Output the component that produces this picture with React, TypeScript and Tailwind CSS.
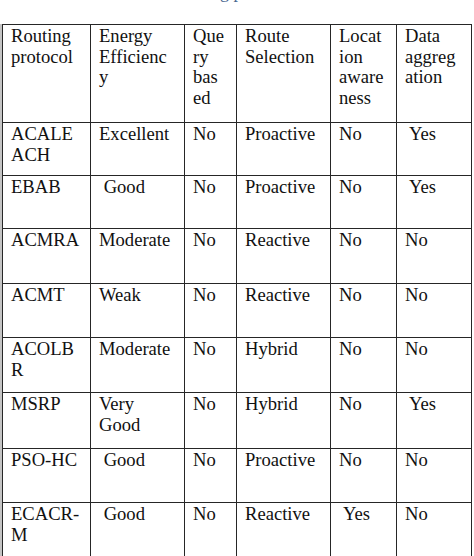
import React from "react";

const header: React.ReactNode[] = [
  <>Routing<br />protocol</>,
  <>Energy<br />Efficienc<br />y</>,
  <>Que<br />ry<br />bas<br />ed</>,
  <>Route<br />Selection</>,
  <>Locat<br />ion<br />aware<br />ness</>,
  <>Data<br />aggreg<br />ation</>,
];

const rows: React.ReactNode[][] = [
  [<>ACALE<br />ACH</>, "Excellent", "No", "Proactive", "No", " Yes"],
  ["EBAB", " Good", "No", "Proactive", "No", " Yes"],
  ["ACMRA", "Moderate", "No", "Reactive", "No", "No"],
  ["ACMT", "Weak", "No", "Reactive", "No", "No"],
  [<>ACOLB<br />R</>, "Moderate", "No", "Hybrid", "No", "No"],
  ["MSRP", <>Very<br />Good</>, "No", "Hybrid", "No", " Yes"],
  ["PSO-HC", " Good", "No", "Proactive", "No", "No"],
  [<>ECACR-<br />M</>, " Good", "No", "Reactive", " Yes", "No"],
];

function Cell({ children }: { children: React.ReactNode }) {
  return (
    <div className="border-r border-b border-[#262626] pl-[8px] pt-[1px] whitespace-pre leading-[20.7px] text-[18.6px] text-[#111] overflow-hidden">
      {children}
    </div>
  );
}

export default function App() {
  return (
    <div
      className="w-[474px] h-[556px] bg-white overflow-hidden"
      style={{ fontFamily: '"Liberation Serif", "Times New Roman", serif' }}
    >
      <div className="h-[24px] overflow-hidden pl-[171px]">
        <div className="mt-[-18.5px] text-[18px] leading-[20.7px] text-[#4a6690] whitespace-nowrap">
          Routing protocols
        </div>
      </div>
      <div className="flex">
        <div className="w-[2px] bg-[#c4c4c4]" />
        <div className="grid grid-cols-[88px_94px_52px_94px_66px_75px] grid-rows-[98px_53px_53px_55px_54px_55px_56px_54px_54px] border-l border-t border-[#262626]">
          {header.map((h, i) => (
            <Cell key={"h" + i}>{h}</Cell>
          ))}
          {rows.map((r, ri) =>
            r.map((c, ci) => <Cell key={ri + "-" + ci}>{c}</Cell>)
          )}
        </div>
      </div>
    </div>
  );
}
